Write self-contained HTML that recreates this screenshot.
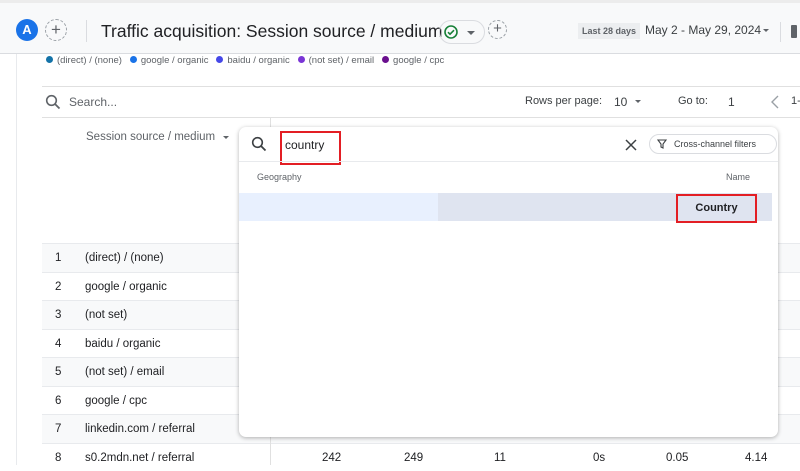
<!DOCTYPE html>
<html><head><style>
*{margin:0;padding:0;box-sizing:border-box}
body{width:800px;height:465px;overflow:hidden;background:#fff;font-family:"Liberation Sans",sans-serif;color:#202124;position:relative}
.a{position:absolute}
.hdr{left:0;top:0;width:800px;height:54px;background:#f8f9fa;border-bottom:1px solid #dadce0;border-top:3px solid #ececec}
.row{left:42px;width:758px;height:28.5px;font-size:11.5px;border-top:1px solid #e8eaed}
.row span{position:absolute;top:8px}
.sh{background:#f8f9fa}
.dot{display:inline-block;width:7px;height:7px;border-radius:50%;margin-right:4px;vertical-align:0}
</style></head><body>
<div class="a" style="left:16px;top:54px;width:1px;height:411px;background:#e8eaed"></div>
<div class="a hdr">
 <div class="a" style="left:16px;top:16px;width:22px;height:22px;border-radius:50%;background:#1a73e8;color:#fff;font-size:13px;font-weight:bold;text-align:center;line-height:22px">A</div>
 <div class="a" style="left:45px;top:16px;width:22px;height:22px;border-radius:50%;border:1px dashed #9aa0a6;color:#5f6368;font-size:17px;text-align:center;line-height:19px">+</div>
 <div class="a" style="left:86px;top:17px;width:1px;height:22px;background:#dadce0"></div>
 <div class="a" style="left:101px;top:18px;font-size:17.5px;color:#202124;white-space:nowrap">Traffic acquisition: Session source / medium</div>
 <div class="a" style="left:439px;top:17px;width:46px;height:24px;border:1px solid #dadce0;border-radius:12px"></div>
 <svg class="a" style="left:444px;top:22px" width="14" height="14" viewBox="0 0 14 14"><circle cx="7" cy="7" r="6" fill="none" stroke="#188038" stroke-width="1.6"/><path d="M4 7.2l2 2 4-4" fill="none" stroke="#188038" stroke-width="1.6"/></svg>
 <div class="a" style="left:467px;top:28px;border:4px solid transparent;border-top-color:#5f6368"></div>
 <div class="a" style="left:488px;top:17px;width:19px;height:19px;border-radius:50%;border:1px dashed #9aa0a6;color:#5f6368;font-size:15px;text-align:center;line-height:16px">+</div>
 <div class="a" style="left:578px;top:20px;width:62px;height:16px;background:#eceef0;font-size:9px;font-weight:bold;color:#5f6368;text-align:center;line-height:16px">Last 28 days</div>
 <div class="a" style="left:645px;top:20px;font-size:12px;color:#3c4043">May 2 - May 29, 2024</div>
 <div class="a" style="left:763px;top:26px;border:3.5px solid transparent;border-top-color:#5f6368"></div>
 <div class="a" style="left:780px;top:19px;width:1px;height:20px;background:#dadce0"></div>
 <div class="a" style="left:791px;top:22px;width:6px;height:13px;background:#5f6368;border-radius:1px"></div>
</div>
<div class="a" style="left:46px;top:55px;font-size:9.5px;color:#5f6368;white-space:nowrap">
<span class="dot" style="background:#1473a8"></span>(direct) / (none)&nbsp;&nbsp; <span class="dot" style="background:#1a73e8"></span>google / organic&nbsp;&nbsp; <span class="dot" style="background:#4648e8"></span>baidu / organic&nbsp;&nbsp; <span class="dot" style="background:#7a35d6"></span>(not set) / email&nbsp;&nbsp; <span class="dot" style="background:#6a0f8e"></span>google / cpc</div>
<div class="a" style="left:42px;top:86px;width:758px;height:1px;background:#e0e0e0"></div>
<svg class="a" style="left:45px;top:94px" width="16" height="16" viewBox="0 0 16 16"><circle cx="6.5" cy="6.5" r="4.8" fill="none" stroke="#5f6368" stroke-width="1.6"/><path d="M10 10l4.5 4.5" stroke="#5f6368" stroke-width="1.8"/></svg>
<div class="a" style="left:69px;top:95px;font-size:12px;color:#5f6368">Search...</div>
<div class="a" style="left:525px;top:95px;font-size:11px;color:#3c4043">Rows per page:</div>
<div class="a" style="left:614px;top:95px;font-size:12px;color:#3c4043">10</div>
<div class="a" style="left:635px;top:100px;border:3.5px solid transparent;border-top-color:#5f6368"></div>
<div class="a" style="left:678px;top:95px;font-size:11px;color:#3c4043">Go to:</div>
<div class="a" style="left:728px;top:95px;font-size:12px;color:#3c4043">1</div>
<svg class="a" style="left:770px;top:95px" width="10" height="14"><path d="M8 1L2 7l6 6" fill="none" stroke="#9aa0a6" stroke-width="1.4"/></svg>
<div class="a" style="left:791px;top:95px;font-size:11px;color:#3c4043">1-</div>
<div class="a" style="left:42px;top:117px;width:758px;height:1px;background:#e0e0e0"></div>
<div class="a" style="left:270px;top:117px;width:1px;height:348px;background:#e0e0e0"></div>
<div class="a" style="left:86px;top:131px;font-size:11.5px;color:#5f6368">Session source / medium</div>
<div class="a" style="left:223px;top:136px;border:3.5px solid transparent;border-top-color:#5f6368"></div>

<div class="a row sh" style="top:243px"><span style="left:13px">1</span><span style="left:43px">(direct) / (none)</span></div>
<div class="a row" style="top:271.5px"><span style="left:13px">2</span><span style="left:43px">google / organic</span></div>
<div class="a row sh" style="top:300px"><span style="left:13px">3</span><span style="left:43px">(not set)</span></div>
<div class="a row" style="top:328.5px"><span style="left:13px">4</span><span style="left:43px">baidu / organic</span></div>
<div class="a row sh" style="top:357px"><span style="left:13px">5</span><span style="left:43px">(not set) / email</span></div>
<div class="a row" style="top:385.5px"><span style="left:13px">6</span><span style="left:43px">google / cpc</span></div>
<div class="a row sh" style="top:414px"><span style="left:13px">7</span><span style="left:43px">linkedin.com / referral</span></div>
<div class="a row" style="top:442.5px"><span style="left:13px">8</span><span style="left:43px">s0.2mdn.net / referral</span>
<span style="left:280px">242</span><span style="left:362px">249</span><span style="left:452px">11</span><span style="left:551px">0s</span><span style="left:624px">0.05</span><span style="left:703px">4.14</span></div>
<div class="a" style="left:270px;top:243px;width:1px;height:222px;background:#e0e0e0"></div>

<div class="a" style="left:239px;top:127px;width:539px;height:310px;background:#fff;border-radius:7px;box-shadow:0 1px 4px rgba(0,0,0,.3)">
 <svg class="a" style="left:12px;top:9px" width="16" height="16" viewBox="0 0 16 16"><circle cx="6.5" cy="6.5" r="4.8" fill="none" stroke="#3c4043" stroke-width="1.6"/><path d="M10 10l4.5 4.5" stroke="#3c4043" stroke-width="1.8"/></svg>
 <div class="a" style="left:41px;top:4px;width:61px;height:34px;border:2px solid #e31e24"></div>
 <div class="a" style="left:46px;top:11px;font-size:12px;color:#202124">country</div>
 <svg class="a" style="left:386px;top:12px" width="12" height="12"><path d="M1 1l10 10M11 1L1 11" stroke="#3c4043" stroke-width="1.5"/></svg>
 <div class="a" style="left:410px;top:7px;width:128px;height:20px;border:1px solid #dadce0;border-radius:10px;font-size:9px;color:#3c4043;line-height:18px;padding-left:24px;white-space:nowrap">Cross-channel filters</div>
 <svg class="a" style="left:418px;top:12px" width="10" height="10"><path d="M1 1h8L6 5v4L4 8V5z" fill="none" stroke="#3c4043" stroke-width="1.1"/></svg>
 <div class="a" style="left:0;top:34px;width:539px;height:1px;background:#e8eaed"></div>
 <div class="a" style="left:18px;top:45px;font-size:9px;color:#5f6368">Geography</div>
 <div class="a" style="left:487px;top:45px;font-size:9px;color:#5f6368">Name</div>
 <div class="a" style="left:0;top:66px;width:533px;height:28px;background:#e8f0fe"></div>
 <div class="a" style="left:199px;top:66px;width:334px;height:28px;background:#dfe4f0"></div>
 <div class="a" style="left:437px;top:67px;width:81px;height:29px;border:2px solid #e31e24;font-size:11px;font-weight:bold;text-align:center;line-height:25px;color:#202124">Country</div>
</div>
</body></html>
